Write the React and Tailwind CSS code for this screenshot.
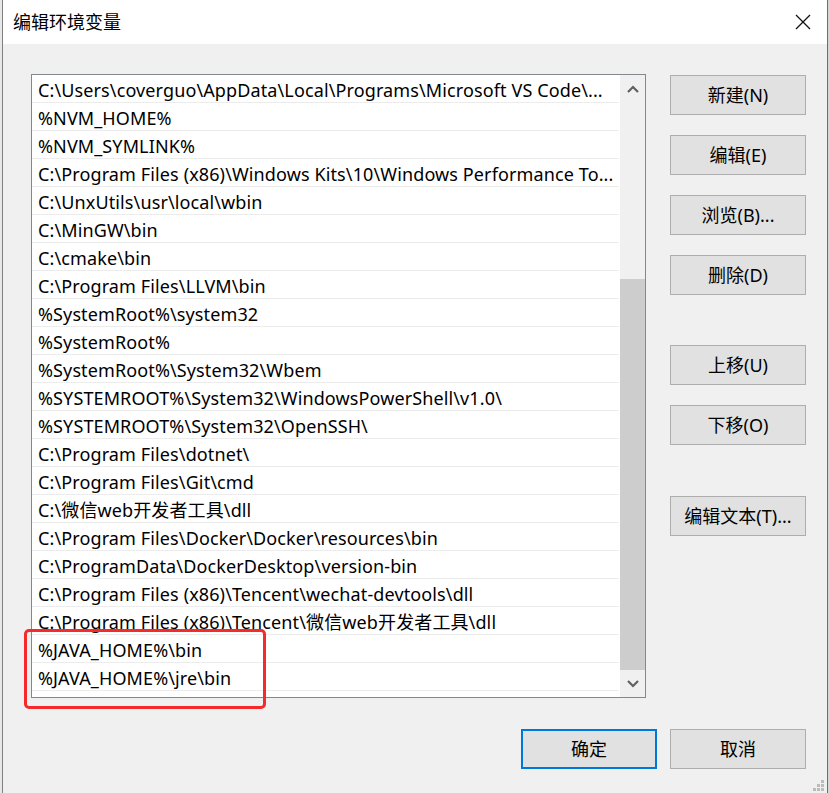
import React from "react";

const paths = [
  "C:\\Users\\coverguo\\AppData\\Local\\Programs\\Microsoft VS Code\\...",
  "%NVM_HOME%",
  "%NVM_SYMLINK%",
  "C:\\Program Files (x86)\\Windows Kits\\10\\Windows Performance To...",
  "C:\\UnxUtils\\usr\\local\\wbin",
  "C:\\MinGW\\bin",
  "C:\\cmake\\bin",
  "C:\\Program Files\\LLVM\\bin",
  "%SystemRoot%\\system32",
  "%SystemRoot%",
  "%SystemRoot%\\System32\\Wbem",
  "%SYSTEMROOT%\\System32\\WindowsPowerShell\\v1.0\\",
  "%SYSTEMROOT%\\System32\\OpenSSH\\",
  "C:\\Program Files\\dotnet\\",
  "C:\\Program Files\\Git\\cmd",
  "C:\\微信web开发者工具\\dll",
  "C:\\Program Files\\Docker\\Docker\\resources\\bin",
  "C:\\ProgramData\\DockerDesktop\\version-bin",
  "C:\\Program Files (x86)\\Tencent\\wechat-devtools\\dll",
  "C:\\Program Files (x86)\\Tencent\\微信web开发者工具\\dll",
  "%JAVA_HOME%\\bin",
  "%JAVA_HOME%\\jre\\bin",
];

const font = { fontFamily: '"Noto Sans", "Noto Sans CJK SC", sans-serif' };

function WinButton({ children, className = "", primary = false }) {
  return (
    <button
      className={
        "w-[136px] h-[40px] bg-[#e1e1e1] text-[18px] text-black flex items-center justify-center " +
        (primary ? "border-2 border-[#0078d7] " : "border border-[#adadad] ") +
        className
      }
    >
      {children}
    </button>
  );
}

function Chevron({ up }) {
  return (
    <svg width="12" height="8" viewBox="0 0 12 8">
      <path
        d={up ? "M1 7 L6 2 L11 7" : "M1 1 L6 6 L11 1"}
        fill="none"
        stroke="#606060"
        strokeWidth="2.2"
      />
    </svg>
  );
}

export default function App() {
  return (
    <div className="relative w-[830px] h-[793px] flex bg-[#f0f0f0] overflow-hidden" style={font}>
      {/* left window edge */}
      <div className="w-[3px] h-full bg-[#e8e8e8] border-r border-[#7f7f7f]" />

      <div className="relative w-[824px] h-full flex flex-col">
        {/* title bar */}
        <div className="h-[44px] bg-white flex items-center justify-between pl-[10px] pr-[16px]">
          <span className="text-[18px] text-black">编辑环境变量</span>
          <svg width="16" height="16" viewBox="0 0 16 16">
            <path d="M1 1 L15 15 M15 1 L1 15" stroke="#111" strokeWidth="1.3" />
          </svg>
        </div>

        {/* body */}
        <div className="flex-1 bg-[#f0f0f0] pt-[30px] pl-[28px] flex flex-col">
          <div className="flex">
            {/* list box */}
            <div className="w-[615px] h-[624px] border border-[#828790] bg-white flex">
              <div className="w-[587px] flex flex-col">
                {paths.map((p) => (
                  <div
                    key={p}
                    className="h-[28px] border-b border-[#ececec] pl-[6px] text-[18px] leading-[31px] tracking-[0.12px] text-black whitespace-nowrap overflow-hidden"
                  >
                    {p}
                  </div>
                ))}
              </div>
              <div className="w-[25px] ml-auto flex flex-col bg-[#f0f0f0]">
                <div className="h-[27px] flex items-center justify-center">
                  <Chevron up />
                </div>
                <div className="h-[177px]" />
                <div className="h-[391px] bg-[#cdcdcd]" />
                <div className="flex-1 flex items-center justify-center">
                  <Chevron />
                </div>
              </div>
            </div>

            {/* side buttons */}
            <div className="ml-[24px] mt-[1px] flex flex-col">
              <WinButton>新建(N)</WinButton>
              <WinButton className="mt-[20px]">编辑(E)</WinButton>
              <WinButton className="mt-[20px]">浏览(B)...</WinButton>
              <WinButton className="mt-[20px]">删除(D)</WinButton>
              <WinButton className="mt-[50px]">上移(U)</WinButton>
              <WinButton className="mt-[20px]">下移(O)</WinButton>
              <WinButton className="mt-[51px]">编辑文本(T)...</WinButton>
            </div>
          </div>

          {/* bottom buttons */}
          <div className="mt-[31px] flex justify-end gap-[13px] pr-[21px]">
            <WinButton primary>确定</WinButton>
            <WinButton>取消</WinButton>
          </div>
        </div>

        {/* resize grip */}
        <svg className="absolute right-[2px] bottom-[1px]" width="12" height="12" viewBox="0 0 12 12">
          <rect x="8" y="0" width="3" height="3" fill="#bcbcbc" />
          <rect x="4" y="4" width="3" height="3" fill="#bcbcbc" />
          <rect x="8" y="4" width="3" height="3" fill="#bcbcbc" />
          <rect x="0" y="8" width="3" height="3" fill="#bcbcbc" />
          <rect x="4" y="8" width="3" height="3" fill="#bcbcbc" />
          <rect x="8" y="8" width="3" height="3" fill="#bcbcbc" />
        </svg>
      </div>

      {/* right window edge */}
      <div className="w-[3px] h-full bg-[#d6d6d6] border-l border-[#6e6e6e]" />

      {/* red annotation box */}
      <div className="absolute left-[24px] top-[629px] w-[242px] h-[80px] border-[3px] border-[#f52a2a] rounded-[5px]" />
    </div>
  );
}
